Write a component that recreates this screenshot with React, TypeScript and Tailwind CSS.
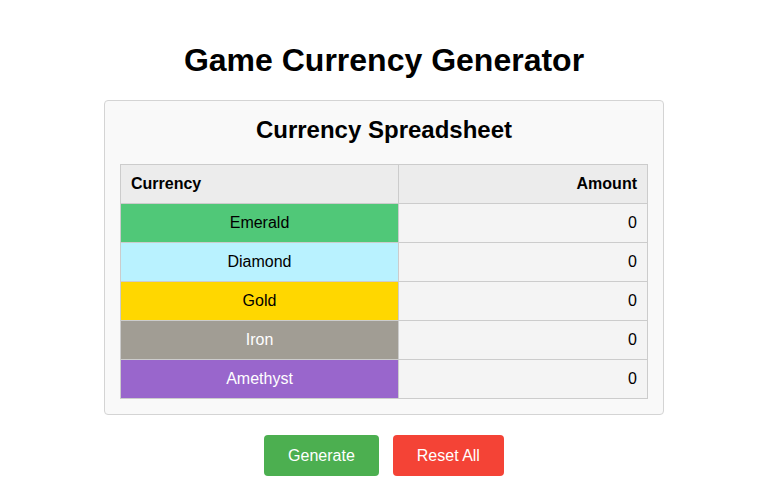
import React, { useState } from 'react';

type Currency = {
  name: string;
  bg: string;
  text: string;
};

const currencies: Currency[] = [
  { name: 'Emerald', bg: 'bg-[#50c878]', text: 'text-black' },
  { name: 'Diamond', bg: 'bg-[#b9f2ff]', text: 'text-black' },
  { name: 'Gold', bg: 'bg-[#ffd700]', text: 'text-black' },
  { name: 'Iron', bg: 'bg-[#a19d94]', text: 'text-white' },
  { name: 'Amethyst', bg: 'bg-[#9966cc]', text: 'text-white' },
];

export default function App() {
  const [amounts, setAmounts] = useState<number[]>(currencies.map(() => 0));

  const generate = () => {
    setAmounts((prev) => prev.map((a) => a + Math.floor(Math.random() * 10)));
  };

  const reset = () => setAmounts(currencies.map(() => 0));

  return (
    <div className="min-h-screen bg-white px-5 pt-5 font-['Liberation_Sans',Arial,sans-serif] text-base text-black">
      <h1 className="mt-[22px] mb-[21px] text-center text-[32px] font-bold leading-[37px]">
        Game Currency Generator
      </h1>

      <div className="mx-auto w-[560px] rounded border border-[#d4d4d4] bg-[#f9f9f9] p-[15px]">
        <h2 className="mb-5 text-center text-2xl font-bold leading-[28px]">Currency Spreadsheet</h2>
        <table className="w-full border-collapse">
          <thead>
            <tr className="bg-[#ececec]">
              <th className="w-[278px] border border-[#cccccc] px-[10px] py-[10px] text-left font-bold leading-[18px]">
                Currency
              </th>
              <th className="border border-[#cccccc] px-[10px] py-[10px] text-right font-bold leading-[18px]">
                Amount
              </th>
            </tr>
          </thead>
          <tbody>
            {currencies.map((c, i) => (
              <tr key={c.name}>
                <td
                  className={`border border-[#cccccc] px-[10px] py-[10px] text-center leading-[18px] ${c.bg} ${c.text}`}
                >
                  {c.name}
                </td>
                <td className="border border-[#cccccc] bg-[#f4f4f4] px-[10px] py-[10px] text-right leading-[18px]">
                  {amounts[i]}
                </td>
              </tr>
            ))}
          </tbody>
        </table>
      </div>

      <div className="mt-5 flex justify-center gap-[14px]">
        <button
          type="button"
          onClick={generate}
          className="rounded bg-[#4caf50] px-6 py-[11px] leading-[19px] text-white"
        >
          Generate
        </button>
        <button
          type="button"
          onClick={reset}
          className="rounded bg-[#f44336] px-6 py-[11px] leading-[19px] text-white"
        >
          Reset All
        </button>
      </div>
    </div>
  );
}
